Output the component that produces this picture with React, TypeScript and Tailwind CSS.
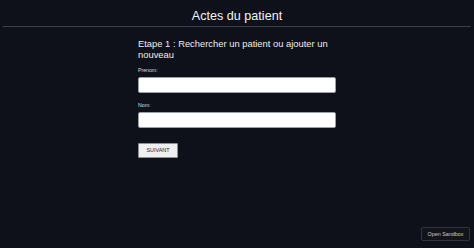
export default function App() {
  return (
    <div
      className="relative min-h-[248px] w-full bg-[#0e101a] text-white"
      style={{ fontFamily: '"Liberation Sans", Arial, sans-serif' }}
    >
      <header className="mx-[3px] flex h-[27px] items-center justify-center border-b border-[#3a3f4b] pt-[5px]">
        <h1 className="text-[12.6px] leading-[14px] text-[#f3f4f6]">Actes du patient</h1>
      </header>
      <main className="mx-auto w-[198px] pt-[11px]">
        <h2 className="text-[9.4px] leading-[11px] text-[#eceef2]">
          Etape 1 : Rechercher un patient ou ajouter un nouveau
        </h2>
        <div className="mt-[7px] flex flex-col">
          <label className="text-[5.2px] leading-[6px] text-[#d8dbe2]">Prenom:</label>
          <input
            type="text"
            className="mt-[4px] h-[16px] w-full rounded-[2px] border border-[#9aa0aa] bg-white outline-none"
          />
        </div>
        <div className="mt-[9px] flex flex-col">
          <label className="text-[5.2px] leading-[6px] text-[#d8dbe2]">Nom:</label>
          <input
            type="text"
            className="mt-[4px] h-[16px] w-full rounded-[2px] border border-[#9aa0aa] bg-white outline-none"
          />
        </div>
        <button className="mt-[15px] flex h-[15px] w-[40px] items-center justify-center rounded-[1px] border border-[#8a8f98] bg-[#efefef] text-[5.4px] leading-none text-[#222]">
          SUIVANT
        </button>
      </main>
      <div className="absolute bottom-[7px] right-[4px] flex h-[14px] w-[49px] items-center justify-center rounded-[2px] border border-[#30343c] bg-[#121419] text-[5.4px] text-[#c8cbd2]">
        Open Sandbox
      </div>
    </div>
  );
}
